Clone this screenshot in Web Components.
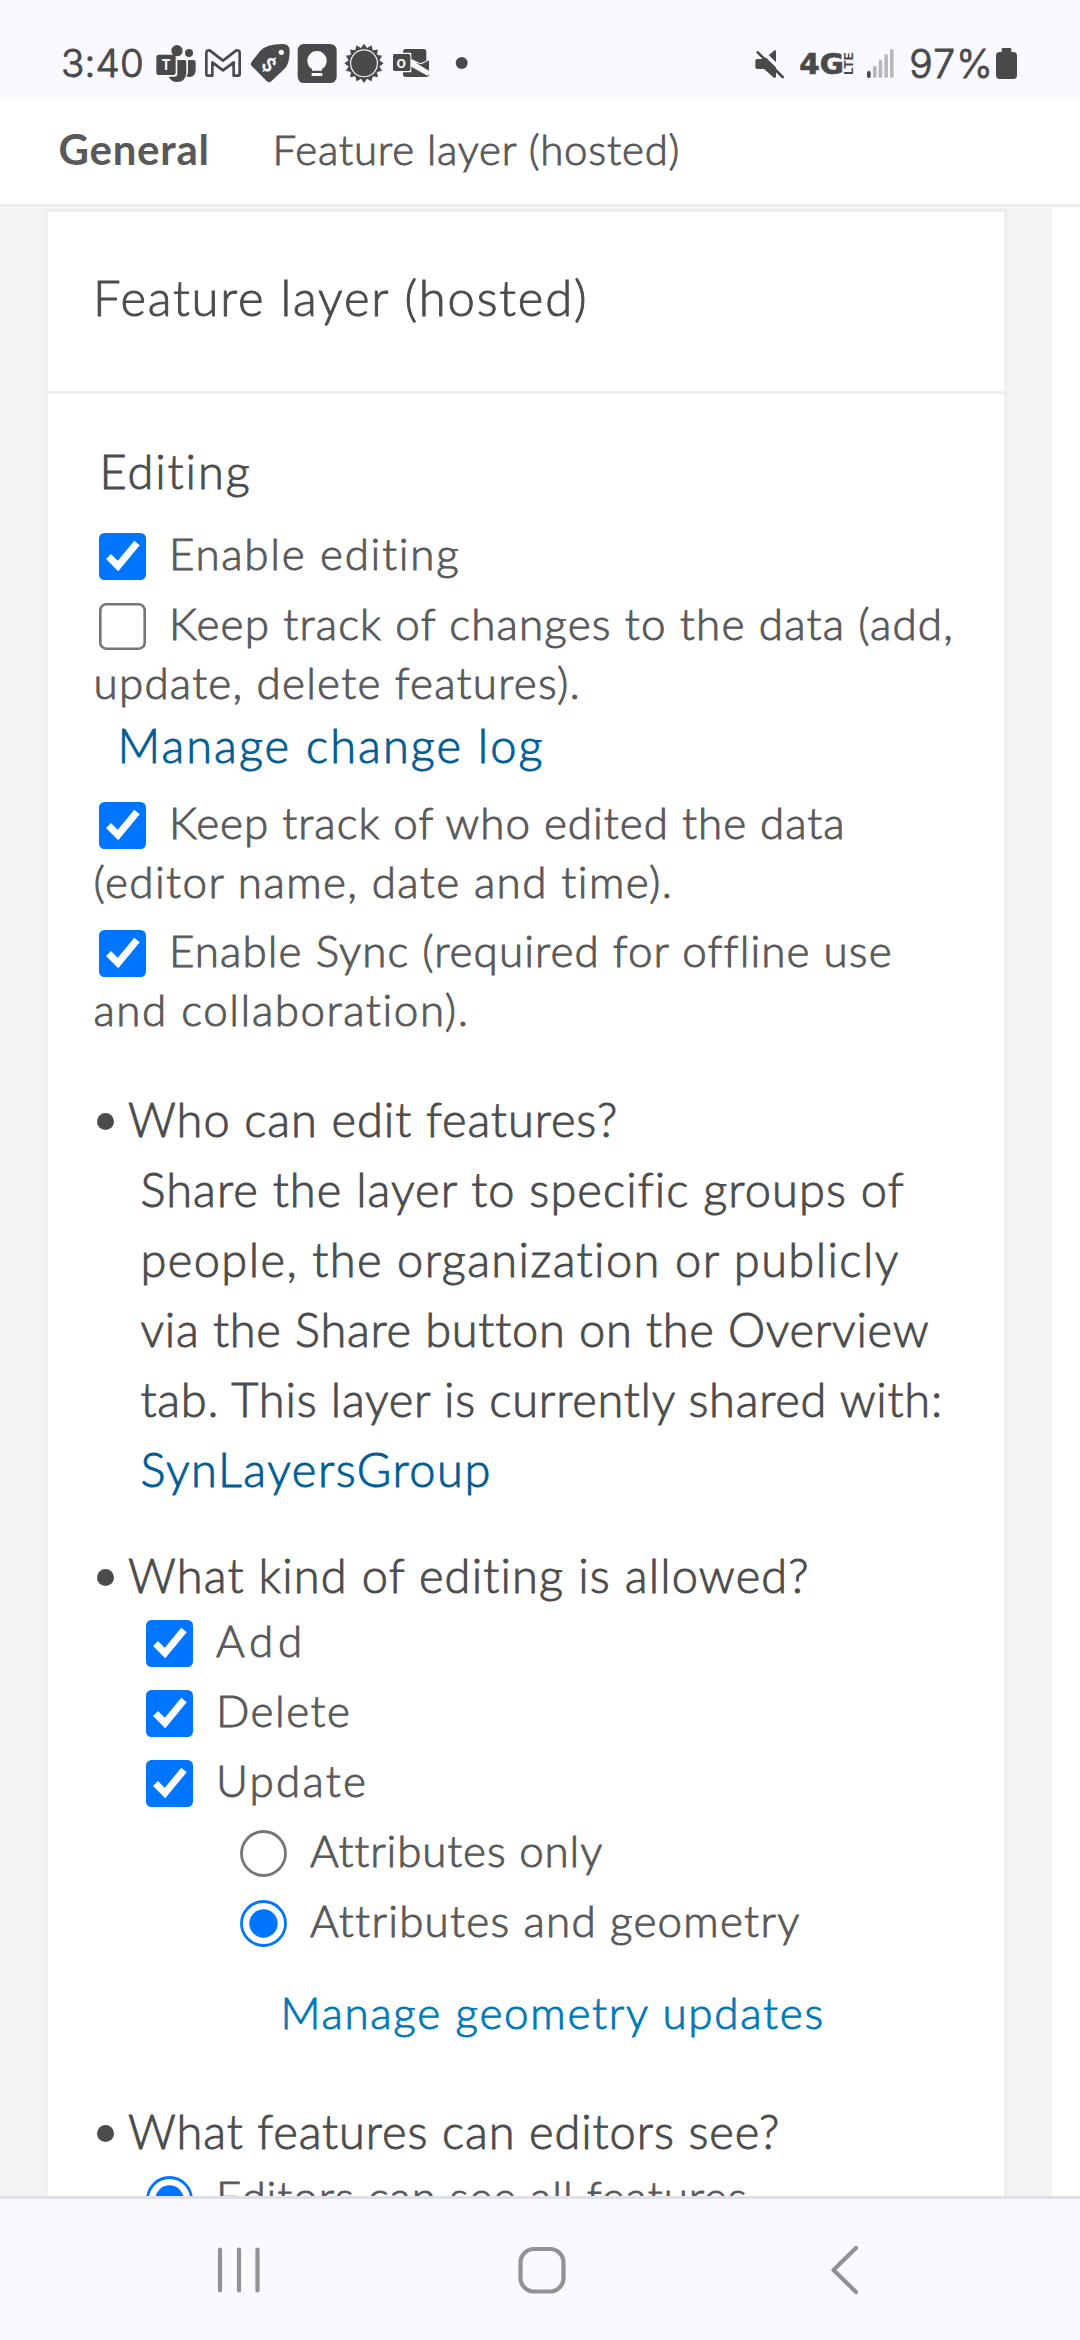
<!DOCTYPE html>
<html lang="en">
<head>
<meta charset="utf-8">
<meta name="viewport" content="width=device-width, initial-scale=1">
<title>Item settings</title>
<style>
  html,
  body {
    margin: 0;
    height: 100%;
    overflow: hidden;
    background: #fff;
    font-family: Lato, "Open Sans", sans-serif;
    color: #4c4c4c;
  }
</style>
</head>
<body>
<phone-screen>
  <status-bar slot="status"></status-bar>

  <tab-bar slot="tabs">
    <text-line size="42" fit="147" bold>General</text-line>
    <text-line size="42" fit="402">Feature layer (hosted)</text-line>
  </tab-bar>

  <settings-card>
    <text-line slot="title" size="49" fit="487">Feature layer (hosted)</text-line>

    <text-line size="47" fit="146" style="margin: 46px 0 0 6px; --line: 62px">Editing</text-line>

    <check-row checked style="margin-top: 22px">
      <text-line fit="286">Enable editing</text-line>
    </check-row>
    <check-row>
      <text-line fit="778">Keep track of changes to the data (add,</text-line>
      <text-line slot="more" fit="481">update, delete features).</text-line>
    </check-row>
    <text-line size="47" fit="420" style="margin: 4px 0 0 24px; color: #005e95">Manage change log</text-line>
    <check-row checked style="margin-top: 18px">
      <text-line fit="670">Keep track of who edited the data</text-line>
      <text-line slot="more" fit="576">(editor name, date and time).</text-line>
    </check-row>
    <check-row checked style="margin-top: 10px">
      <text-line fit="716">Enable Sync (required for offline use</text-line>
      <text-line slot="more" fit="372">and collaboration).</text-line>
    </check-row>

    <bullet-section style="margin-top: 45px">
      <text-line slot="heading" size="47" fit="486">Who can edit features?</text-line>
      <text-line size="47" fit="761">Share the layer to specific groups of</text-line>
      <text-line size="47" fit="756">people, the organization or publicly</text-line>
      <text-line size="47" fit="786">via the Share button on the Overview</text-line>
      <text-line size="47" fit="802">tab. This layer is currently shared with:</text-line>
      <text-line size="47" fit="346" style="color: #005e95">SynLayersGroup</text-line>
    </bullet-section>

    <bullet-section style="margin-top: 36px">
      <text-line slot="heading" size="47" fit="679">What kind of editing is allowed?</text-line>
      <check-row checked style="margin-top: 1px">
        <text-line fit="83">Add</text-line>
      </check-row>
      <check-row checked>
        <text-line fit="128">Delete</text-line>
      </check-row>
      <check-row checked>
        <text-line fit="144">Update</text-line>
      </check-row>
      <check-row radio style="margin-left: 94px">
        <text-line fit="291">Attributes only</text-line>
      </check-row>
      <check-row radio checked style="margin-left: 94px">
        <text-line fit="488">Attributes and geometry</text-line>
      </check-row>
      <text-line fit="538" style="margin: 33px 0 0 140px; --line: 59px; color: #0079b8">Manage geometry updates</text-line>
    </bullet-section>

    <bullet-section style="margin-top: 54px">
      <text-line slot="heading" size="47" fit="648">What features can editors see?</text-line>
      <check-row radio checked style="margin-top: 1px">
        <text-line fit="525">Editors can see all features</text-line>
      </check-row>
    </bullet-section>
  </settings-card>

  <nav-bar slot="nav"></nav-bar>
</phone-screen>

<script>
const define = (name, cls) => {
  if (!customElements.get(name)) customElements.define(name, cls)
}

class BaseElement extends HTMLElement {
  constructor() {
    super()
    this.attachShadow({ mode: "open" })
  }

  connectedCallback() {
    this.render()
  }
}

// Single line of text, tracked so that its ink spans `fit` pixels
class TextLine extends BaseElement {
  static ctx = document.createElement("canvas").getContext("2d")

  get size() {
    return Number(this.getAttribute("size")) || 44
  }

  get weight() {
    return this.hasAttribute("bold") ? 700 : 300
  }

  get tracking() {
    const fit = Number(this.getAttribute("fit"))
    const text = this.textContent.trim()
    if (!fit || text.length < 2) return 0
    const ctx = TextLine.ctx
    const family = this.getAttribute("family") || "Lato"
    ctx.font = `${this.weight} ${this.size}px ${family}`
    const m = ctx.measureText(text)
    const ink = m.actualBoundingBoxRight + m.actualBoundingBoxLeft
    return (fit - ink) / (text.length - 1)
  }

  render() {
    const family = this.getAttribute("family")
    this.shadowRoot.innerHTML = `
      <style>
        :host {
          display: block;
          white-space: nowrap;
          font-size: ${this.size}px;
          font-weight: ${this.weight};
          ${family ? `font-family: ${family}, sans-serif;` : ""}
          line-height: var(--line, 59px);
          letter-spacing: ${this.tracking.toFixed(3)}px;
          font-variant-ligatures: none;
          -webkit-text-stroke: ${this.hasAttribute("bold") ? 0 : 0.9}px currentColor;
        }
      </style>
      <slot></slot>
    `
  }
}

class PhoneScreen extends BaseElement {
  render() {
    this.shadowRoot.innerHTML = `
      <style>
        :host {
          display: grid;
          grid-template-rows: 99px 109px minmax(0, 1fr) 144px;
          height: 2340px;
          overflow: hidden;
        }
        main {
          box-sizing: border-box;
          width: 1051.5px;
          padding: 1px 44.5px 0 45px;
          overflow: hidden;
          background: #f3f3f3;
        }
      </style>
      <slot name="status"></slot>
      <slot name="tabs"></slot>
      <main><slot></slot></main>
      <slot name="nav"></slot>
    `
  }
}

class StatusBar extends BaseElement {
  // Sixteen-pointed burst behind the sun disc
  burst(cx, cy, outer, inner) {
    return Array.from({ length: 32 }, (_, i) => {
      const r = i % 2 ? inner : outer
      const a = (i * Math.PI) / 16 - Math.PI / 2
      return `${(cx + r * Math.cos(a)).toFixed(1)},${(cy + r * Math.sin(a)).toFixed(1)}`
    }).join(" ")
  }

  render() {
    this.shadowRoot.innerHTML = `
      <style>
        :host {
          display: flex;
          box-sizing: border-box;
          padding: 40px 0 0 61px;
          background: #faf9ff;
          color: #4a4a4a;
          --line: 47px;
        }
        .time { width: 92.3px; }
        .right {
          display: flex;
          margin-left: 267.7px;
        }
        .right text-line { width: 86px; margin-left: 11px; }
        svg {
          display: block;
          flex: none;
          height: 47px;
          fill: currentColor;
        }
        .icon { width: 47px; }
        .bg { fill: #faf9ff; }
        .line { fill: none; stroke: currentColor; }
        text { font-family: Roboto, sans-serif; font-weight: 700; }
      </style>
      <text-line class="time" size="38.5" fit="79" family="Inter">3:40</text-line>

      <svg class="icon" viewBox="340 60 141 141">
        <circle cx="412" cy="92" r="17"/>
        <circle cx="448" cy="99" r="12"/>
        <path d="M413 120H434Q440 120 440 127V158Q438 185 412 186Q395 186 387 170H406Q413 169 413 161Z"/>
        <path d="M445 120H462Q468 120 468 127V151Q467 171 449 171Q443 171 440 169Q445 163 445 155Z"/>
        <rect x="350" y="104" width="58" height="61" rx="7"/>
        <text class="bg" x="379" y="150" font-size="42" text-anchor="middle">T</text>
      </svg>

      <svg class="icon" viewBox="481 60 141 141">
        <path class="line" stroke-width="8" stroke-linejoin="round" d="M500 162V99Q500 90 510 91L550 122L590 91Q600 90 600 99V162Q600 167 595 167H582V127L550 151L518 127V167H505Q500 167 500 162Z"/>
      </svg>

      <svg class="icon" viewBox="622 60 141 141">
        <path d="M636 125L662 92Q680 73 728 72Q750 71 750 92Q750 132 734 147L695 184Q688 190 681 183L636 138Q631 132 636 125Z"/>
        <circle class="bg" cx="725" cy="97" r="8"/>
        <text class="bg" font-size="60" text-anchor="middle" transform="translate(688 134) rotate(42)" y="21">$</text>
      </svg>

      <svg class="icon" viewBox="763 60 141 141">
        <rect x="774" y="72" width="117" height="117" rx="19"/>
        <path class="bg" d="M817 152V147A29 29 0 1 1 847 147V152Z"/>
        <rect class="bg" x="816" y="159" width="32" height="9"/>
      </svg>

      <svg class="icon" viewBox="904 60 141 141">
        <polygon points="${this.burst(973, 130, 59, 47)}"/>
        <circle class="bg" cx="973" cy="130" r="42"/>
        <circle cx="973" cy="130" r="38.5"/>
      </svg>

      <svg class="icon" viewBox="1045 60 141 141">
        <path d="M1090 95Q1090 87 1098 87H1152Q1160 87 1160 95V122L1142 130L1115 117V101Q1115 98 1112 98H1090Z"/>
        <path d="M1117 126L1168 153V162L1163 167L1115 140V157H1090V163Q1090 171 1098 171H1160Q1168 171 1168 163V121L1145 133Z"/>
        <path class="bg" d="M1115 120L1172 155V165L1115 135Z"/>
        <rect x="1060" y="102" width="52" height="51" rx="5"/>
        <text class="bg" x="1085" y="143" font-size="41" text-anchor="middle">O</text>
      </svg>

      <svg class="icon" viewBox="1186 60 141 141">
        <circle cx="1266" cy="129" r="18"/>
      </svg>

      <div class="right">
        <svg width="40" viewBox="60 60 120 141">
          <path d="M82 117H102L132 92Q138 87 138 95V167Q138 178 130 172L102 147H82Q76 147 76 141V123Q76 117 82 117Z"/>
          <path class="line" style="stroke: #faf9ff" stroke-width="11" d="M88 85L170 166"/>
          <path class="line" stroke-width="8" stroke-linecap="round" d="M83 97L158 171"/>
        </svg>
        <svg width="75" viewBox="180 60 225 141">
          <text x="208" y="161" font-size="85" textLength="134" lengthAdjust="spacingAndGlyphs" stroke="currentColor" stroke-width="2" style="font-family: 'DejaVu Sans', sans-serif">4G</text>
          <text font-size="38" textLength="66" lengthAdjust="spacingAndGlyphs" transform="translate(370 164) rotate(-90)">LTE</text>
        </svg>
        <svg width="33.3" viewBox="402 60 100 141">
          <rect x="408" y="153" width="11" height="21" rx="5"/>
          <g fill="#b9b9bb">
            <rect x="426" y="137" width="11" height="37" rx="5"/>
            <rect x="443" y="120" width="11" height="54" rx="5"/>
            <rect x="460" y="102" width="11" height="72" rx="5"/>
            <rect x="477" y="87" width="11" height="87" rx="5"/>
          </g>
        </svg>
        <text-line size="39" fit="78" family="Inter">97%</text-line>
        <svg width="24" viewBox="798 60 72 141">
          <path d="M818 88Q818 84 822 84H843Q847 84 847 88V96H853Q864 96 864 107V166Q864 177 853 177H812Q801 177 801 166V107Q801 96 812 96H818Z"/>
        </svg>
      </div>
    `
  }
}

class TabBar extends BaseElement {
  render() {
    this.shadowRoot.innerHTML = `
      <style>
        :host {
          display: block;
          background: #fff;
        }
        nav {
          display: flex;
          height: 105px;
          border-bottom: 3px solid #ededed;
          padding-left: 58.5px;
          color: #595959;
          --line: 100px;
        }
        ::slotted(:first-child) { width: 214px; }
      </style>
      <nav><slot></slot></nav>
    `
  }
}

class SettingsCard extends BaseElement {
  render() {
    this.shadowRoot.innerHTML = `
      <style>
        :host {
          display: block;
          height: 2100px;
          box-sizing: border-box;
          border: 3px solid #eee;
          background: #fff;
        }
        header {
          height: 179px;
          border-bottom: 3px solid #eee;
          padding-left: 45px;
          --line: 171px;
        }
        section {
          display: flow-root;
          padding-left: 45.5px;
        }
      </style>
      <header><slot name="title"></slot></header>
      <section><slot></slot></section>
    `
  }
}

class CheckRow extends BaseElement {
  get mark() {
    const checked = this.hasAttribute("checked")
    if (this.hasAttribute("radio")) {
      return `
        <circle cx="23.5" cy="23.5" r="22" fill="#fff" stroke="${checked ? "#0075ff" : "#767676"}" stroke-width="2.8"/>
        ${checked ? '<circle cx="23.5" cy="23.5" r="14.2" fill="#0075ff"/>' : ""}
      `
    }
    return checked
      ? `
        <rect width="47" height="47" rx="5.5" fill="#0075ff"/>
        <path d="M9.5 23.5L19 33L38 10" fill="none" stroke="#fff" stroke-width="7"/>
      `
      : '<rect x="1.3" y="1.3" width="44.4" height="44.4" rx="6" fill="#fff" stroke="#767676" stroke-width="2.6"/>'
  }

  render() {
    this.shadowRoot.innerHTML = `
      <style>
        :host {
          display: block;
          margin-top: 11px;
          color: #595959;
          --line: 59px;
        }
        label {
          display: flex;
          align-items: center;
          gap: 23px;
          height: 59px;
          padding-left: 5.5px;
        }
        svg {
          flex: none;
          margin-top: 6px;
        }
      </style>
      <label>
        <svg width="47" height="47" viewBox="0 0 47 47">${this.mark}</svg>
        <slot></slot>
      </label>
      <slot name="more"></slot>
    `
  }
}

class BulletSection extends BaseElement {
  render() {
    this.shadowRoot.innerHTML = `
      <style>
        :host {
          display: block;
          --line: 70px;
        }
        h3 {
          display: flex;
          align-items: center;
          gap: 14px;
          height: 70px;
          margin: 0;
          padding-left: 3.5px;
          font-weight: inherit;
        }
        h3::before {
          content: "";
          width: 17px;
          height: 17px;
          margin-top: 4px;
          border-radius: 50%;
          background: #4c4c4c;
        }
        .content {
          padding-left: 47px;
        }
      </style>
      <h3><slot name="heading"></slot></h3>
      <div class="content"><slot></slot></div>
    `
  }
}

class NavBar extends BaseElement {
  render() {
    this.shadowRoot.innerHTML = `
      <style>
        :host {
          display: flex;
          justify-content: space-between;
          box-sizing: border-box;
          border-top: 3px solid #e0e0ea;
          padding: 46px 210px 0 214px;
          background: #faf9ff;
        }
        svg {
          width: 50px;
          height: 50px;
          fill: none;
          stroke: #929294;
          stroke-width: 4.2;
          stroke-linecap: round;
          stroke-linejoin: round;
        }
      </style>
      <svg viewBox="0 0 50 50"><path d="M6 4.5V45.5M25 4.5V45.5M43.5 4.5V45.5"/></svg>
      <svg viewBox="0 0 50 50"><rect x="3.5" y="4" width="43" height="42.5" rx="13.5"/></svg>
      <svg viewBox="0 0 50 50"><path d="M36 3L13.5 25L36 47"/></svg>
    `
  }
}

define("text-line", TextLine)
define("status-bar", StatusBar)
define("tab-bar", TabBar)
define("check-row", CheckRow)
define("bullet-section", BulletSection)
define("settings-card", SettingsCard)
define("nav-bar", NavBar)
define("phone-screen", PhoneScreen)
</script>
</body>
</html>
